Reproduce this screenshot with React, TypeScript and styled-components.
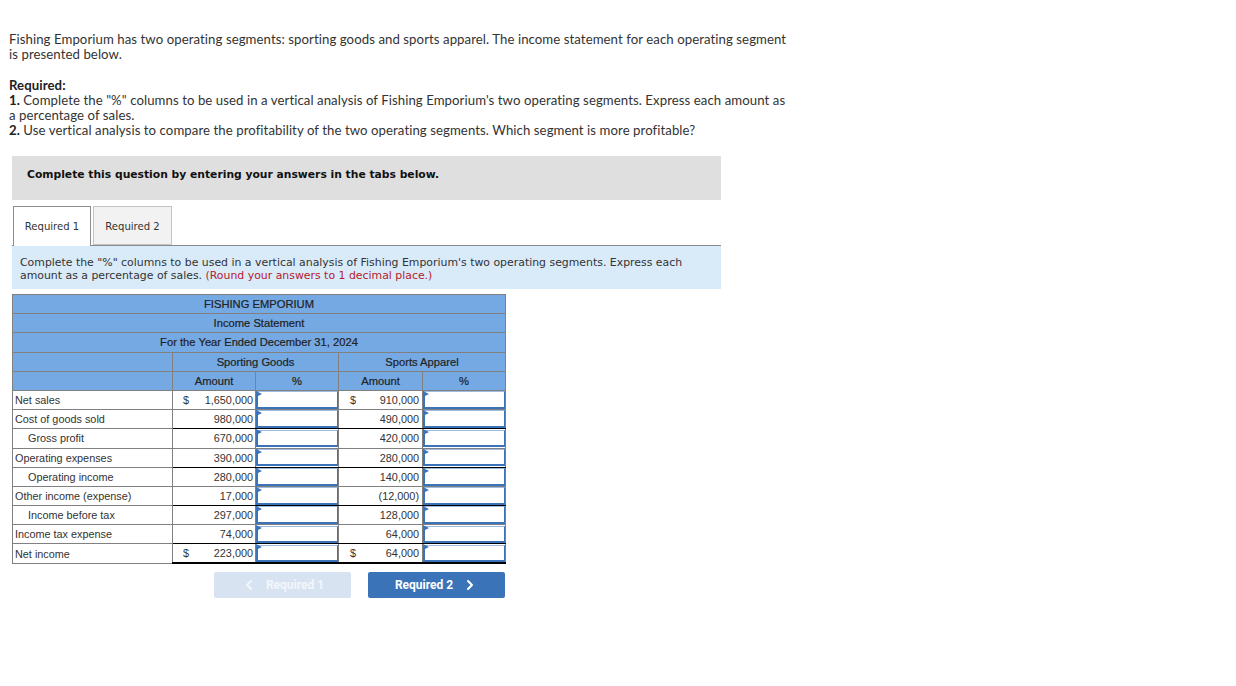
import React from 'react';
import styled, { createGlobalStyle } from 'styled-components';
import { ChevronLeft, ChevronRight } from 'lucide-react';

const GlobalStyle = createGlobalStyle`
  html, body {
    margin: 0;
    padding: 0;
    background: #fff;
  }
`;

const Page = styled.div`
  width: 1236px;
  height: 686px;
  box-sizing: border-box;
  padding: 32px 0 0 9px;
  overflow: hidden;
  font-family: Lato, "Liberation Sans", sans-serif;
  color: #333;
`;

const Paragraph = styled.p`
  width: 781px;
  margin: 0 0 16px;
  font-size: 13.2px;
  line-height: 15px;
  letter-spacing: 0.07px;
`;

const Strong = styled.strong`
  font-weight: 700;
  color: #222;
`;

const Widget = styled.div`
  width: 709px;
  margin: 18px 0 0 3px;
`;

const Banner = styled.div`
  height: 44px;
  box-sizing: border-box;
  padding: 0 0 7px 15px;
  display: flex;
  align-items: center;
  background: #dfdfdf;
  color: #111;
  font-family: "DejaVu Sans", Verdana, sans-serif;
  font-size: 10.75px;
  font-weight: 700;
`;

const TabBar = styled.div`
  display: flex;
  gap: 2px;
  height: 40px;
  box-sizing: border-box;
  margin-top: 6px;
  padding-left: 1px;
  border-bottom: 1px solid #8c8c8c;
`;

const Tab = styled.div<{ $active?: boolean }>`
  width: ${props => (props.$active ? '78px' : '79px')};
  height: ${props => (props.$active ? '40px' : '39px')};
  box-sizing: border-box;
  display: flex;
  align-items: center;
  justify-content: center;
  padding-top: ${props => (props.$active ? '0' : '1px')};
  background: ${props => (props.$active ? '#fff' : '#f2f2f2')};
  border: 1px solid ${props => (props.$active ? '#8c8c8c' : '#c4c4c4')};
  border-bottom: ${props => (props.$active ? 'none' : '1px solid #c4c4c4')};
  color: #333;
  font-family: "DejaVu Sans", Verdana, sans-serif;
  font-size: 10.1px;
`;

const Instructions = styled.div`
  height: 43px;
  box-sizing: border-box;
  padding: 10px 8px 0;
  background: #d9ebf9;
  color: #333;
  font-family: "DejaVu Sans", Verdana, sans-serif;
  font-size: 10.9px;
  line-height: 13px;
`;

const Hint = styled.span`
  color: #b5202c;
`;

const Sheet = styled.table`
  width: 493px;
  margin-top: 5px;
  border-collapse: collapse;
  table-layout: fixed;
  font-family: "Liberation Sans", Arial, sans-serif;
  font-size: 10.85px;
  color: #333;
`;

const HeadCell = styled.th`
  height: 19.2px;
  padding: 0;
  box-sizing: border-box;
  background: #74a9e4;
  border: 1px solid #808080;
  color: #222;
  font-size: 11.2px;
  font-weight: 400;
  text-align: center;
  -webkit-text-stroke: 0.2px #222;
`;

const Row = styled.tr`
  height: 19.2px;
`;

const LabelCell = styled.td<{ $indent?: boolean }>`
  padding: 0 0 0 ${props => (props.$indent ? '15px' : '2px')};
  border: 1px solid #808080;
  white-space: nowrap;
`;

const AmountCell = styled.td<{ $rule?: 'single' | 'double'; $wide?: boolean }>`
  padding: ${props => (props.$wide ? '0 3px 0 11px' : '0 2px 0 10px')};
  border: 1px solid #808080;
  border-bottom: ${props =>
    props.$rule === 'double' ? '2px solid #000' : props.$rule === 'single' ? '1px solid #000' : '1px solid #808080'};
`;

const AmountInner = styled.div`
  display: flex;
  justify-content: space-between;
`;

const InputCell = styled.td<{ $rule?: 'single' | 'double' }>`
  position: relative;
  padding: 0;
  border: 1px solid #808080;
  border-bottom: ${props =>
    props.$rule === 'double' ? '2px solid #000' : props.$rule === 'single' ? '1px solid #000' : '1px solid #808080'};
`;

const PercentInput = styled.input`
  display: block;
  width: 100%;
  height: 17.5px;
  box-sizing: border-box;
  padding: 0;
  background: #fff;
  border: 1px solid #3b73b9;
  border-top-color: #9dbbe0;
  border-left-width: 2px;
  border-bottom-width: 2px;
  border-radius: 0;
  outline: none;
`;

const Corner = styled.span`
  position: absolute;
  top: 0;
  left: 0;
  width: 0;
  height: 0;
  border-top: 3.5px solid transparent;
  border-bottom: 3.5px solid transparent;
  border-left: 6px solid #3b73b9;
`;

const NavRow = styled.div`
  display: flex;
  gap: 17px;
  width: 291px;
  margin: 8px 0 0 202px;
`;

const NavButton = styled.button<{ $disabled?: boolean }>`
  flex: 1;
  height: 26px;
  padding: 0;
  display: flex;
  align-items: center;
  justify-content: center;
  gap: 9px;
  border: none;
  border-radius: 2px;
  background: ${props => (props.$disabled ? '#d8e3f1' : '#3b73b9')};
  color: ${props => (props.$disabled ? '#f3f6fb' : '#fff')};
  font-family: Roboto, "Liberation Sans", sans-serif;
  font-size: 12px;
  font-weight: 700;
`;

type Line = {
  label: string;
  indent?: boolean;
  sporting: string;
  apparel: string;
  dollar?: boolean;
  rule?: 'single' | 'double';
};

const lines: Line[] = [
  { label: 'Net sales', sporting: '1,650,000', apparel: '910,000', dollar: true },
  { label: 'Cost of goods sold', sporting: '980,000', apparel: '490,000', rule: 'single' },
  { label: 'Gross profit', indent: true, sporting: '670,000', apparel: '420,000' },
  { label: 'Operating expenses', sporting: '390,000', apparel: '280,000', rule: 'single' },
  { label: 'Operating income', indent: true, sporting: '280,000', apparel: '140,000' },
  { label: 'Other income (expense)', sporting: '17,000', apparel: '(12,000)', rule: 'single' },
  { label: 'Income before tax', indent: true, sporting: '297,000', apparel: '128,000' },
  { label: 'Income tax expense', sporting: '74,000', apparel: '64,000', rule: 'single' },
  { label: 'Net income', sporting: '223,000', apparel: '64,000', dollar: true, rule: 'double' },
];

const App: React.FC = () => {
  return (
    <Page>
      <GlobalStyle />
      <Paragraph>
        Fishing Emporium has two operating segments: sporting goods and sports apparel. The income statement for each
        operating segment is presented below.
      </Paragraph>
      <Paragraph>
        <Strong>Required:</Strong>
        <br />
        <Strong>1.</Strong> Complete the "%" columns to be used in a vertical analysis of Fishing Emporium's two
        operating segments. Express each amount as a percentage of sales.
        <br />
        <Strong>2.</Strong> Use vertical analysis to compare the profitability of the two operating segments. Which
        segment is more profitable?
      </Paragraph>

      <Widget>
        <Banner>Complete this question by entering your answers in the tabs below.</Banner>
        <TabBar>
          <Tab $active>Required 1</Tab>
          <Tab>Required 2</Tab>
        </TabBar>
        <Instructions>
          Complete the "%" columns to be used in a vertical analysis of Fishing Emporium's two operating segments.
          Express each amount as a percentage of sales. <Hint>(Round your answers to 1 decimal place.)</Hint>
        </Instructions>

        <Sheet>
          <colgroup>
            <col style={{ width: 160 }} />
            <col style={{ width: 83 }} />
            <col style={{ width: 83 }} />
            <col style={{ width: 84 }} />
            <col style={{ width: 83 }} />
          </colgroup>
          <thead>
            <tr>
              <HeadCell colSpan={5}>FISHING EMPORIUM</HeadCell>
            </tr>
            <tr>
              <HeadCell colSpan={5}>Income Statement</HeadCell>
            </tr>
            <tr>
              <HeadCell colSpan={5}>For the Year Ended December 31, 2024</HeadCell>
            </tr>
            <tr>
              <HeadCell />
              <HeadCell colSpan={2}>Sporting Goods</HeadCell>
              <HeadCell colSpan={2}>Sports Apparel</HeadCell>
            </tr>
            <tr>
              <HeadCell />
              <HeadCell>Amount</HeadCell>
              <HeadCell>%</HeadCell>
              <HeadCell>Amount</HeadCell>
              <HeadCell>%</HeadCell>
            </tr>
          </thead>
          <tbody>
            {lines.map(line => (
              <Row key={line.label}>
                <LabelCell $indent={line.indent}>{line.label}</LabelCell>
                <AmountCell $rule={line.rule}>
                  <AmountInner>
                    <span>{line.dollar ? '$' : ''}</span>
                    <span>{line.sporting}</span>
                  </AmountInner>
                </AmountCell>
                <InputCell $rule={line.rule}>
                  <PercentInput type="text" aria-label={`${line.label} sporting goods percent`} />
                  <Corner />
                </InputCell>
                <AmountCell $rule={line.rule} $wide>
                  <AmountInner>
                    <span>{line.dollar ? '$' : ''}</span>
                    <span>{line.apparel}</span>
                  </AmountInner>
                </AmountCell>
                <InputCell $rule={line.rule}>
                  <PercentInput type="text" aria-label={`${line.label} sports apparel percent`} />
                  <Corner />
                </InputCell>
              </Row>
            ))}
          </tbody>
        </Sheet>

        <NavRow>
          <NavButton $disabled>
            <ChevronLeft size={16} strokeWidth={3} />
            Required 1
          </NavButton>
          <NavButton>
            Required 2
            <ChevronRight size={16} strokeWidth={3} />
          </NavButton>
        </NavRow>
      </Widget>
    </Page>
  );
};

export default App;
